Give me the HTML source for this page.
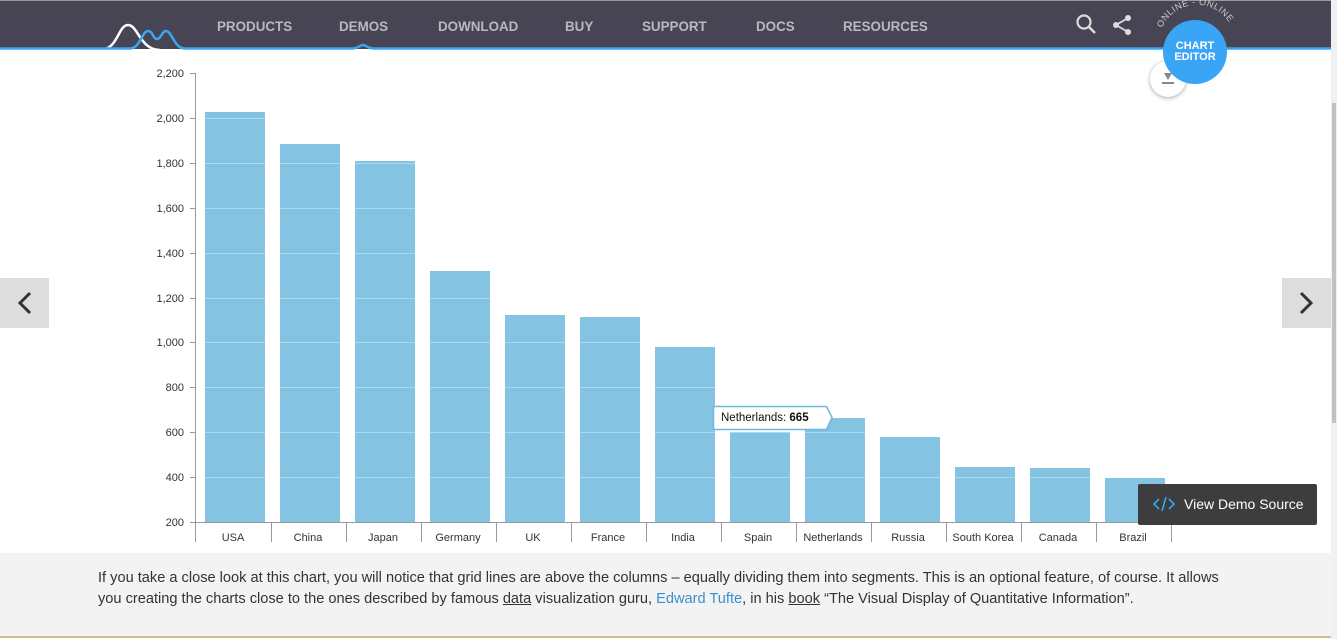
<!DOCTYPE html>
<html><head><style>
body{margin:0;width:1337px;height:639px;overflow:hidden;background:#fff;font-family:"Liberation Sans",sans-serif;position:relative}
.nav{position:absolute;left:0;top:0;width:1331px;height:48px;background:#474554;border-top:1px solid #999}
.nav a{position:absolute;top:18px;color:#b9b8c2;font-weight:bold;font-size:13.4px;text-decoration:none}
.foot{position:absolute;left:0;top:553px;width:1331px;height:83px;background:#f3f3f3;border-bottom:2px solid #c9c08a}
.foot p{margin:0;position:absolute;left:98px;top:15px;width:1145px;font-size:14.6px;line-height:21px;color:#333}
.arrow{position:absolute;top:278px;width:49px;height:50px;background:#ddd}
.vds{position:absolute;left:1138px;top:484px;width:179px;height:41px;background:#3d3d3d;color:#fff;font-size:14px;border-radius:2px}
</style></head><body>
<div class="nav">
<a style="left:217px">PRODUCTS</a><a style="left:339px">DEMOS</a><a style="left:438px">DOWNLOAD</a><a style="left:565px">BUY</a><a style="left:642px">SUPPORT</a><a style="left:756px">DOCS</a><a style="left:843px">RESOURCES</a>
</div>
<svg style="position:absolute;left:0;top:0" width="1337" height="60">
<path d="M100 50 C118 50 118 25 128 25 C138 25 140 50 160 50" fill="none" stroke="#fff" stroke-width="2.5"/>
<path d="M0 48.5 H130 C140 48.5 142 31 148 31 C153 31 153 39 157 39 C161 39 162 31 166 31 C172 31 174 48.5 185 48.5 H352 C358 48.5 360 45 363 45 C366 45 368 48.5 374 48.5 H1331" fill="none" stroke="#3aa5f0" stroke-width="2.5"/>
<circle cx="1084" cy="22" r="6.5" fill="none" stroke="#ddd" stroke-width="2.2"/><path d="M1089 27 L1095 33" stroke="#ddd" stroke-width="2.5"/>
<circle cx="1128" cy="18" r="3" fill="#ddd"/><circle cx="1116" cy="25" r="3" fill="#ddd"/><circle cx="1128" cy="32" r="3" fill="#ddd"/><path d="M1128 18 L1116 25 L1128 32" stroke="#ddd" stroke-width="1.8" fill="none"/>
<path id="arc" d="M1162 28 A38 38 0 0 1 1232 28" fill="none"/><text font-size="9" fill="#ccc" font-family="Liberation Sans" letter-spacing="0.5"><textPath href="#arc">ONLINE - ONLINE</textPath></text>
<rect x="1331" y="0" width="6" height="60" fill="#f0f0f0"/>
</svg>
<div style="position:absolute;left:1331px;top:48px;width:6px;height:591px;background:#f1f1f1"><div style="position:absolute;left:1px;top:55px;width:4px;height:320px;background:#c1c1c1"></div></div>
<div style="position:absolute;left:1150px;top:61px;width:36px;height:36px;border-radius:50%;background:#fff;box-shadow:0 1px 4px rgba(0,0,0,.35)"><div style="position:absolute;left:12px;top:21px;width:12px;height:2px;background:#888"></div><div style="position:absolute;left:14px;top:12px;width:0;height:0;border-left:4px solid transparent;border-right:4px solid transparent;border-top:7px solid #888"></div></div>
<div style="position:absolute;left:1163px;top:20px;width:64px;height:64px;border-radius:50%;background:#3aa5f5;color:#fff;font-weight:bold;font-size:11px;text-align:center;line-height:11px;padding-top:21px;box-sizing:border-box">CHART<br>EDITOR</div>

<svg style="position:absolute;left:0;top:60px" width="1331" height="493" font-family="Liberation Sans" font-size="11" fill="#333">
<g transform="translate(0,-60)">
<g fill="#85c3e3">
<rect x="205" y="112" width="60" height="410"/>
<rect x="280" y="144" width="60" height="378"/>
<rect x="355" y="161" width="60" height="361"/>
<rect x="430" y="271" width="60" height="251"/>
<rect x="505" y="315" width="60" height="207"/>
<rect x="580" y="317" width="60" height="205"/>
<rect x="655" y="347" width="60" height="175"/>
<rect x="730" y="432" width="60" height="90"/>
<rect x="805" y="418" width="60" height="104"/>
<rect x="880" y="437" width="60" height="85"/>
<rect x="955" y="467" width="60" height="55"/>
<rect x="1030" y="468" width="60" height="54"/>
<rect x="1105" y="478" width="60" height="44"/>
</g>
<g stroke="#fff" stroke-opacity=".35"><path d="M196 477.5H1172M196 432.5H1172M196 387.5H1172M196 342.5H1172M196 298.5H1172M196 253.5H1172M196 208.5H1172M196 163.5H1172M196 118.5H1172"/></g>
<g stroke="#999"><path d="M195.5 73V542M190 73.5H195M190 118.5H195M190 163.5H195M190 208.5H195M190 253.5H195M190 298.5H195M190 342.5H195M190 387.5H195M190 432.5H195M190 477.5H195M190 522.5H195M196 522.5H1172M271.5 522V542M346.5 522V542M421.5 522V542M496.5 522V542M571.5 522V542M646.5 522V542M721.5 522V542M796.5 522V542M871.5 522V542M946.5 522V542M1021.5 522V542M1096.5 522V542M1171.5 522V542"/></g>
<g text-anchor="end"><text x="184" y="77">2,200</text><text x="184" y="122">2,000</text><text x="184" y="167">1,800</text><text x="184" y="212">1,600</text><text x="184" y="257">1,400</text><text x="184" y="302">1,200</text><text x="184" y="346">1,000</text><text x="184" y="391">800</text><text x="184" y="436">600</text><text x="184" y="481">400</text><text x="184" y="526">200</text></g>
<g text-anchor="middle"><text x="233" y="541">USA</text><text x="308" y="541">China</text><text x="383" y="541">Japan</text><text x="458" y="541">Germany</text><text x="533" y="541">UK</text><text x="608" y="541">France</text><text x="683" y="541">India</text><text x="758" y="541">Spain</text><text x="833" y="541">Netherlands</text><text x="908" y="541">Russia</text><text x="983" y="541">South Korea</text><text x="1058" y="541">Canada</text><text x="1133" y="541">Brazil</text></g>
<path d="M713.5 406.5H826.5L832 417.5L826.5 429.5H713.5Z" fill="#fff" stroke="#6fb6dc" stroke-width="1.5"/>
<text x="721" y="421" fill="#111" font-size="11.5">Netherlands: <tspan font-weight="bold">665</tspan></text>
</g></svg>
<div class="arrow" style="left:0"><svg width="49" height="50"><path d="M30 15 L20 25 L30 35" stroke="#333" stroke-width="3" fill="none"/></svg></div>
<div class="arrow" style="left:1282px"><svg width="49" height="50"><path d="M19 15 L29 25 L19 35" stroke="#333" stroke-width="3" fill="none"/></svg></div>
<div class="vds"><svg style="position:absolute;left:15px;top:12px" width="22" height="16"><path d="M6 3L1 8L6 13M16 3L21 8L16 13M13 1L9 15" stroke="#3aa5f5" stroke-width="1.6" fill="none"/></svg><span style="position:absolute;left:46px;top:12px">View Demo Source</span></div>
<div class="foot"><p>If you take a close look at this chart, you will notice that grid lines are above the columns – equally dividing them into segments. This is an optional feature, of course. It allows you creating the charts close to the ones described by famous <u>data</u> visualization guru, <span style="color:#3a8fd0">Edward Tufte</span>, in his <u>book</u> “The Visual Display of Quantitative Information”.</p></div>
</body></html>
